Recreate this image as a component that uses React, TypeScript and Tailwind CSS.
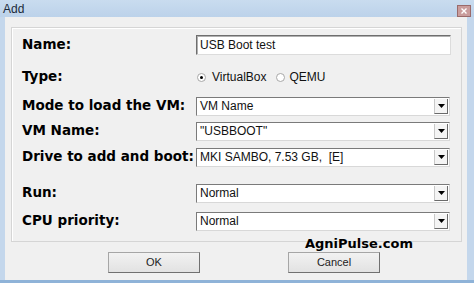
import React from "react";

const labelCls = "w-[174px] shrink-0 whitespace-nowrap text-[13.5px] font-bold text-black leading-none";
const ui = { fontFamily: '"Liberation Sans", Arial, sans-serif' };
const lbl = { fontFamily: '"DejaVu Sans", Verdana, sans-serif' };

function Select({ value }: { value: string }) {
  return (
    <div className="relative flex h-[19px] w-[254px] items-center border border-t-[#7a7a7a] border-l-[#7a7a7a] border-r-[#d8d8d8] border-b-[#d8d8d8] bg-white">
      <span className="whitespace-pre pl-[3px] text-[12px] text-[#111]" style={ui}>{value}</span>
      <div className="absolute right-[1px] top-[1px] flex h-[15px] w-[14px] items-center justify-center border-l border-l-[#c8c8c8] border-b border-b-[#6a6a6a] border-r border-r-[#6a6a6a] bg-[#f4f4f4]">
        <svg width="7" height="4" viewBox="0 0 7 4"><path d="M0 0H7L3.5 4Z" fill="#000" /></svg>
      </div>
    </div>
  );
}

function Radio({ checked }: { checked?: boolean }) {
  return (
    <span className="flex h-[9px] w-[9px] items-center justify-center rounded-full border border-[#a8a8a8] bg-white">
      {checked && <span className="h-[3px] w-[3px] rounded-full bg-black" />}
    </span>
  );
}

export default function App() {
  return (
    <div className="relative flex h-[283px] w-[474px] flex-col bg-[#c4d7ec]">
      <div className="flex h-[17px] items-center justify-between bg-gradient-to-b from-[#c9dcef] to-[#bcd2ea] pl-[3px] pr-[3px]">
        <span className="text-[12px] text-[#1c2a3a]" style={ui}>Add</span>
        <div className="mt-[4px] flex h-[12px] w-[14px] items-center justify-center border border-[#9a6a6a] bg-[#c99c9c]">
          <svg width="6" height="6" viewBox="0 0 6 6"><path d="M0.5 0.5L5.5 5.5M5.5 0.5L0.5 5.5" stroke="#fff" strokeWidth="1.4" /></svg>
        </div>
      </div>
      <div className="ml-[5px] mr-[7px] flex flex-1 flex-col bg-[#f0f0f0] pt-[10px]">
        <div className="ml-[6px] mr-[5px] flex h-[215px] flex-col border border-[#d5d5d5] pl-[10px] pr-[10px] pt-[7px] shadow-[inset_1px_1px_0_#fff]">
          <div className="flex h-[20px] items-center" style={lbl}>
            <span className={labelCls}>Name:</span>
            <div className="flex h-[20px] w-[255px] items-center border border-t-[#6e6e6e] border-l-[#6e6e6e] border-r-[#dcdcdc] border-b-[#dcdcdc] bg-white shadow-[inset_1px_1px_0_#b0b0b0]">
              <span className="pl-[3px] text-[12px] text-[#111]" style={ui}>USB Boot test</span>
            </div>
          </div>
          <div className="mt-[12px] flex h-[20px] items-center" style={lbl}>
            <span className={labelCls}>Type:</span>
            <div className="flex items-center pl-[1px]">
              <Radio checked />
              <span className="ml-[6px] text-[12px] text-[#111]" style={ui}>VirtualBox</span>
              <span className="ml-[10px]"><Radio /></span>
              <span className="ml-[4px] text-[12px] text-[#111]" style={ui}>QEMU</span>
            </div>
          </div>
          <div className="mt-[9px] flex h-[20px] items-center" style={lbl}>
            <span className={labelCls}>Mode to load the VM:</span>
            <Select value="VM Name" />
          </div>
          <div className="mt-[5px] flex h-[20px] items-center" style={lbl}>
            <span className={labelCls}>VM Name:</span>
            <Select value={'"USBBOOT"'} />
          </div>
          <div className="mt-[6px] flex h-[20px] items-center" style={lbl}>
            <span className={labelCls}>Drive to add and boot:</span>
            <Select value="MKI SAMBO, 7.53 GB,  [E]" />
          </div>
          <div className="mt-[16px] flex h-[20px] items-center" style={lbl}>
            <span className={labelCls}>Run:</span>
            <Select value="Normal" />
          </div>
          <div className="mt-[8px] flex h-[20px] items-center" style={lbl}>
            <span className={labelCls}>CPU priority:</span>
            <Select value="Normal" />
          </div>
        </div>
        <div className="mt-[10px] flex pl-[103px]">
          <button className="h-[21px] w-[92px] border border-[#a6a6a6] border-r-[#707070] border-b-[#707070] bg-gradient-to-b from-[#f2f2f2] to-[#e2e2e2] text-[11px] text-[#222]" style={ui}>OK</button>
          <button className="ml-[88px] h-[21px] w-[92px] border border-[#a6a6a6] border-r-[#707070] border-b-[#707070] bg-gradient-to-b from-[#f2f2f2] to-[#e2e2e2] text-[11px] text-[#222]" style={ui}>Cancel</button>
        </div>
      </div>
      <div className="h-[3px] bg-[#8fb3d8]" />
      <span className="absolute left-[305px] top-[237px] text-[13px] font-bold leading-none text-black" style={lbl}>AgniPulse.com</span>
    </div>
  );
}
